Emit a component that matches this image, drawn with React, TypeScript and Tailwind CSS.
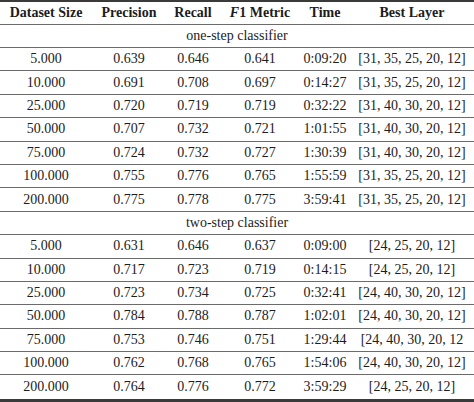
const cols = ["w-[92px]", "w-[74px]", "w-[54px]", "w-[80px]", "w-[50px]", "flex-1"];

const oneStep = [
  ["5.000", "0.639", "0.646", "0.641", "0:09:20", "[31, 35, 25, 20, 12]"],
  ["10.000", "0.691", "0.708", "0.697", "0:14:27", "[31, 35, 25, 20, 12]"],
  ["25.000", "0.720", "0.719", "0.719", "0:32:22", "[31, 40, 30, 20, 12]"],
  ["50.000", "0.707", "0.732", "0.721", "1:01:55", "[31, 40, 30, 20, 12]"],
  ["75.000", "0.724", "0.732", "0.727", "1:30:39", "[31, 40, 30, 20, 12]"],
  ["100.000", "0.755", "0.776", "0.765", "1:55:59", "[31, 35, 25, 20, 12]"],
  ["200.000", "0.775", "0.778", "0.775", "3:59:41", "[31, 35, 25, 20, 12]"],
];

const twoStep = [
  ["5.000", "0.631", "0.646", "0.637", "0:09:00", "[24, 25, 20, 12]"],
  ["10.000", "0.717", "0.723", "0.719", "0:14:15", "[24, 25, 20, 12]"],
  ["25.000", "0.723", "0.734", "0.725", "0:32:41", "[24, 40, 30, 20, 12]"],
  ["50.000", "0.784", "0.788", "0.787", "1:02:01", "[24, 40, 30, 20, 12]"],
  ["75.000", "0.753", "0.746", "0.751", "1:29:44", "[24, 40, 30, 20, 12"],
  ["100.000", "0.762", "0.768", "0.765", "1:54:06", "[24, 40, 30, 20, 12]"],
  ["200.000", "0.764", "0.776", "0.772", "3:59:29", "[24, 25, 20, 12]"],
];

function Row({ cells, last }: { cells: string[]; last?: boolean }) {
  return (
    <div className={`flex h-[23.4px] items-center ${last ? "" : "border-b border-[#6b6b6b]"}`}>
      {cells.map((c, i) => (
        <div key={i} className={`${cols[i]} text-center`}>
          {c}
        </div>
      ))}
    </div>
  );
}

function Label({ text }: { text: string }) {
  return (
    <div className="flex h-[23.4px] items-center justify-center border-b border-[#6b6b6b]">
      {text}
    </div>
  );
}

export default function App() {
  return (
    <div
      className="w-[474px] h-[402px] bg-white text-[14px] leading-none text-[#1c1c1c]"
      style={{ fontFamily: '"Liberation Serif", serif' }}
    >
      <div className="border-t-2 border-b-[3px] border-[#3a3a3a]">
        {/* Header */}
        <div className="flex h-[22.6px] items-center border-b border-[#6b6b6b] font-bold">
          <div className={`${cols[0]} text-center`}>Dataset Size</div>
          <div className={`${cols[1]} text-center`}>Precision</div>
          <div className={`${cols[2]} text-center`}>Recall</div>
          <div className={`${cols[3]} text-center`}>
            <span className="italic">F</span>1 Metric
          </div>
          <div className={`${cols[4]} text-center`}>Time</div>
          <div className={`${cols[5]} text-center`}>Best Layer</div>
        </div>

        <Label text="one-step classifier" />
        {oneStep.map((r, i) => (
          <Row key={"a" + i} cells={r} />
        ))}

        <Label text="two-step classifier" />
        {twoStep.map((r, i) => (
          <Row key={"b" + i} cells={r} last={i === twoStep.length - 1} />
        ))}
      </div>
    </div>
  );
}
